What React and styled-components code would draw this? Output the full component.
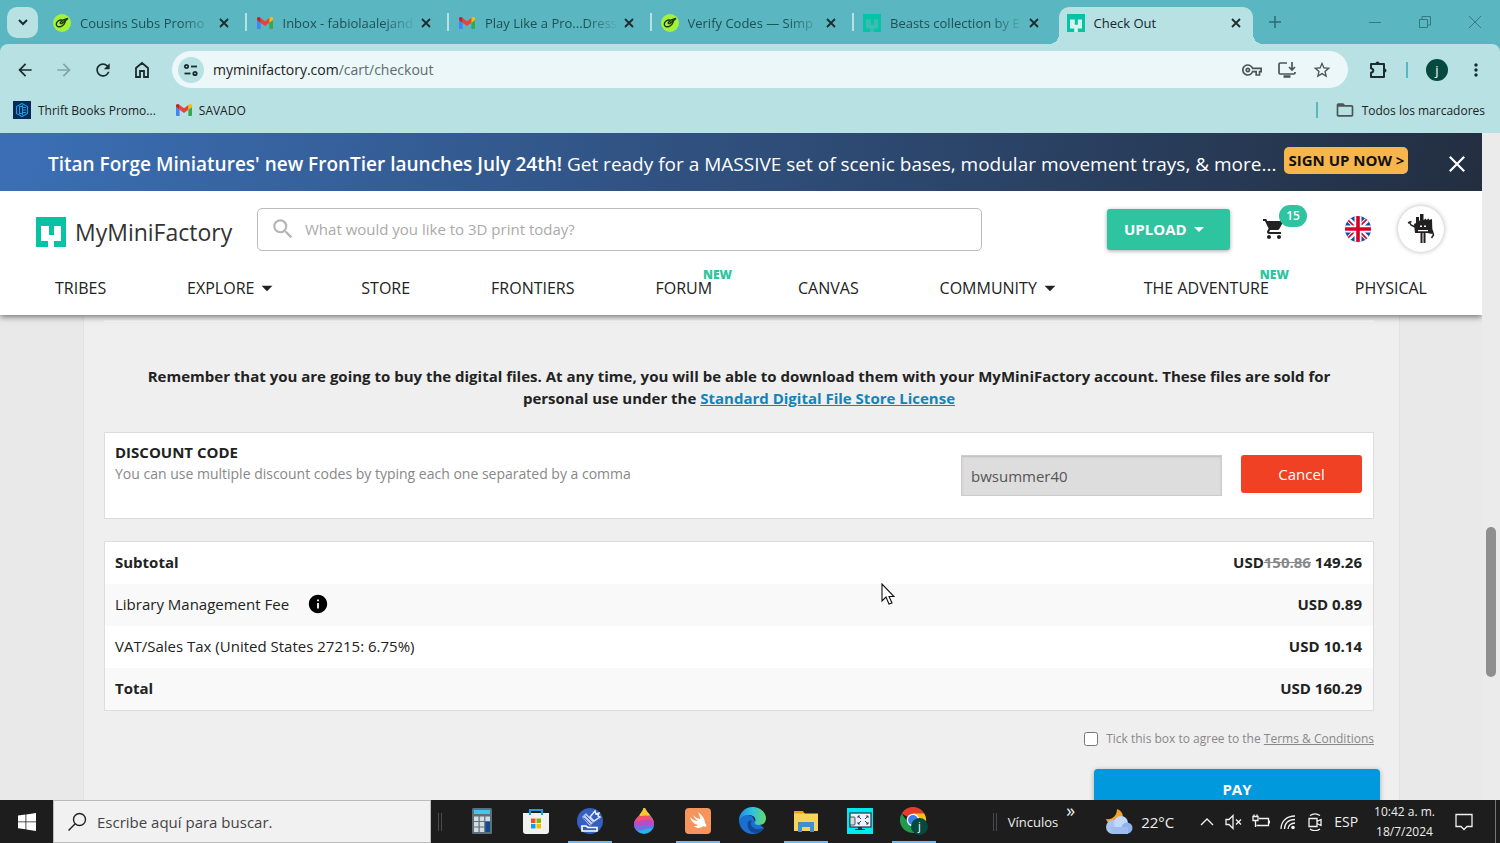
import styled, { createGlobalStyle, css } from 'styled-components';
import {
  MdArrowBack,
  MdArrowForward,
  MdRefresh,
  MdOutlineVpnKey,
  MdStarBorder,
  MdMoreVert,
  MdSearch,
  MdShoppingCart,
  MdArrowDropDown,
  MdInfo,
  MdFolderOpen,
} from 'react-icons/md';

const tabs = [
  { title: 'Cousins Subs Promo', icon: 'simply' },
  { title: 'Inbox - fabiolaalejand', icon: 'gmail' },
  { title: 'Play Like a Pro...Dress', icon: 'gmail' },
  { title: 'Verify Codes — Simp', icon: 'simply' },
  { title: 'Beasts collection by E', icon: 'mmf' },
  { title: 'Check Out', icon: 'mmf', active: true },
];

const menu = [
  { label: 'TRIBES' },
  { label: 'EXPLORE', caret: true },
  { label: 'STORE' },
  { label: 'FRONTIERS' },
  { label: 'FORUM', isNew: true },
  { label: 'CANVAS' },
  { label: 'COMMUNITY', caret: true },
  { label: 'THE ADVENTURE', isNew: true },
  { label: 'PHYSICAL' },
];

function GmailIcon() {
  return (
    <svg width="16" height="12" viewBox="52 42 88 66" aria-hidden="true">
      <path fill="#4285f4" d="M58 108h14V74L52 59v43c0 3.32 2.69 6 6 6" />
      <path fill="#34a853" d="M120 108h14c3.32 0 6-2.69 6-6V59l-20 15" />
      <path fill="#fbbc04" d="M120 48v26l20-15v-8c0-7.42-8.47-11.65-14.4-7.2" />
      <path fill="#ea4335" d="M72 74V48l24 18 24-18v26L96 92" />
      <path fill="#c5221f" d="M52 51v8l20 15V48l-5.6-4.2c-5.94-4.45-14.4-.22-14.4 7.2" />
    </svg>
  );
}

function SimplyIcon() {
  return (
    <svg width="18" height="18" viewBox="0 0 18 18" aria-hidden="true">
      <circle cx="9" cy="9" r="9" fill="#a4f13c" />
      <g fill="none" stroke="#1c3a12" strokeWidth="1.4" strokeLinecap="round" strokeLinejoin="round">
        <path d="M9 6C6 5.600 3.300 7.800 3.300 10.300c0 2.300 2.700 3 5 2 2.200-1 3.500-2.800 4-5" />
        <path d="M14.500 4.500C12 5 9 6.500 7.500 8.300c-.8 1.200.3 1.700 1.500 1.100L14.500 5" />
      </g>
    </svg>
  );
}

function MmfIcon({ size = 18, inner = '#fff' }) {
  return (
    <svg width={size} height={size} viewBox="0 0 30 30" aria-hidden="true">
      <path fill={inner} d="M3 3h24v27H3z" />
      <path fill="#05c3a5" fillRule="evenodd" d="M0 0h30v30H18v-6h7V9h-7v9h-5V9H5v15h7v6H0z" />
    </svg>
  );
}

function TabIcon({ name, active }) {
  if (name === 'gmail') return <GmailIcon />;
  if (name === 'simply') return <SimplyIcon />;
  return <MmfIcon inner={active ? '#d8f3f0' : '#3bbdb5'} />;
}

function CrossIcon({ size = 10, width = 1.8 }) {
  return (
    <svg width={size} height={size} viewBox="0 0 10 10" aria-hidden="true">
      <path d="M1 1l8 8M9 1L1 9" stroke="currentColor" strokeWidth={width} fill="none" />
    </svg>
  );
}

function HomeIcon() {
  return (
    <svg width="16" height="18" viewBox="0 0 16 18" fill="none" stroke="#1d2b2d" strokeWidth="1.8" aria-hidden="true">
      <path d="M2 16V7l6-5 6 5v9h-4v-6H6v6z" />
    </svg>
  );
}

function TuneIcon() {
  return (
    <svg width="16" height="14" viewBox="0 0 16 14" fill="none" stroke="#1d2b2d" strokeWidth="1.8" aria-hidden="true">
      <circle cx="3.500" cy="3.500" r="1.700" />
      <path d="M8 3.500h6" />
      <circle cx="12" cy="10.500" r="1.700" />
      <path d="M1.500 10.500h6" />
    </svg>
  );
}

function InstallIcon() {
  return (
    <svg width="20" height="18" viewBox="0 0 20 18" fill="none" stroke="#4b5557" strokeWidth="1.700" aria-hidden="true">
      <path d="M10 2H3.200C2.500 2 2 2.500 2 3.200v8.600c0 .7.500 1.200 1.200 1.200h13.600c.7 0 1.200-.5 1.200-1.200V11" />
      <path d="M15 1v7.500M12 6l3 3 3-3" />
      <path d="M6.500 15.500h7" strokeWidth="2.500" />
    </svg>
  );
}

function PuzzleIcon() {
  return (
    <svg width="20" height="20" viewBox="0 0 20 20" aria-hidden="true">
      <path d="M3 4h13v13H3v-4.200c3-.6 3-4 0-4.600z" fill="none" stroke="#1d2b2d" strokeWidth="2" strokeLinejoin="round" />
      <path d="M7.500 3.500a2 2 0 0 1 4 0zM16.500 8.500a2 2 0 0 1 0 4z" fill="#1d2b2d" />
    </svg>
  );
}

function ThriftIcon() {
  return (
    <svg width="18" height="18" viewBox="0 0 18 18" aria-hidden="true">
      <path fill="#062a55" d="M0 0h18v18H0z" />
      <path d="M9 2.500l5.500 3v7L9 15.500l-5.500-3v-7zM9 5.500H6.500v7H9M9.500 4v10M10 6.500h3M10 9h3M10 11.500h3" fill="none" stroke="#1c9be0" strokeWidth="1.100" />
    </svg>
  );
}

function FlagIcon() {
  return (
    <svg width="26" height="26" viewBox="0 0 26 26" aria-hidden="true">
      <clipPath id="flag"><circle cx="13" cy="13" r="13" /></clipPath>
      <g clipPath="url(#flag)">
        <path fill="#0b4ea8" d="M0 0h26v26H0z" />
        <path stroke="#fff" strokeWidth="5" d="M0 0l26 26M26 0L0 26" />
        <path stroke="#d80027" strokeWidth="1.600" d="M0 1l26 26M26-1L0 25" />
        <path stroke="#fff" strokeWidth="7" d="M13 0v26M0 13h26" />
        <path stroke="#d80027" strokeWidth="3.600" d="M13 0v26M0 13h26" />
      </g>
    </svg>
  );
}

function RobotIcon() {
  return (
    <svg width="28" height="32" viewBox="0 0 28 32" aria-hidden="true">
      <path fill="#231f20" d="M7 11l2-1V4h3v4l1-.5V1h3.500v6L19 5.500V7l3-1.500V7l3-1 .5 15L20 20H8z" />
      <path fill="none" stroke="#231f20" strokeWidth="1.500" d="M8 14l-4-2-2-3.500M1 10l3.500-1.500M25 17l1.500 5-2 3" />
      <path fill="none" stroke="#231f20" strokeWidth="2" d="M14.500 20v10M17.500 20v10" />
      <path fill="#fff" d="M13 12.500h2v1.500h-2zM17 12.500h2v1.500h-2zM11 17h10v1.300H11z" />
    </svg>
  );
}

function WindowsIcon() {
  return (
    <svg width="18" height="18" viewBox="0 0 18 18" fill="#fff" aria-hidden="true">
      <path d="M0 2.500L7.500 1.500v7H0zM8.300 1.400L18 0v8.500H8.300zM0 9.300h7.500v7L0 15.300zM8.300 9.300H18V18l-9.700-1.400z" />
    </svg>
  );
}

function CalculatorIcon() {
  return (
    <svg width="26" height="28" viewBox="0 0 26 28" aria-hidden="true">
      <rect x="3" y="1" width="20" height="26" rx="1.500" fill="#5c6f7b" />
      <path fill="#45c6ec" d="M5 3h16v4H5z" />
      <path fill="#d5dde2" d="M5 9.500h4.500V14H5zM10.700 9.500h4.500V14h-4.500zM16.400 9.500H21V14h-4.600zM5 15h4.500v4.500H5zM10.700 15h4.500v4.500h-4.500zM5 20.500h4.500V25H5zM10.700 20.500h4.500V25h-4.500z" />
      <path fill="#0f4b91" d="M16.400 15H21v10h-4.600z" />
    </svg>
  );
}

function StoreIcon() {
  return (
    <svg width="26" height="28" viewBox="0 0 26 28" aria-hidden="true">
      <path d="M7 8V3h12v5" fill="none" stroke="#1c9fe2" strokeWidth="2.200" />
      <path d="M0 6h26v18a3 3 0 0 1-3 3H3a3 3 0 0 1-3-3z" fill="#f1f1f1" />
      <path d="M6 5h2v3H6zM18 5h2v3h-2z" fill="#1c9fe2" />
      <path fill="#f25022" d="M8 11.500h4.500V16H8z" />
      <path fill="#7fba00" d="M13.500 11.500H18V16h-4.500z" />
      <path fill="#00a4ef" d="M8 17h4.500v4.500H8z" />
      <path fill="#ffb900" d="M13.500 17H18v4.500h-4.500z" />
    </svg>
  );
}

function ScannerIcon() {
  return (
    <svg width="26" height="26" viewBox="0 0 26 26" aria-hidden="true">
      <circle cx="13" cy="13" r="13" fill="#355fc0" />
      <path fill="#b9c9ee" d="M5 9l4-4 8 9-4 4z" />
      <path d="M6.500 9.500l7 7M8.500 7.500l7 7" stroke="#355fc0" strokeWidth="1" />
      <path d="M13 9l5-6 1 3 3-1-1 3 2 1-6 4z" fill="none" stroke="#e7edfb" strokeWidth="1.400" />
      <path d="M5 18h4l2 1.500h9V23H5z" fill="#355fc0" stroke="#fff" strokeWidth="1.600" />
    </svg>
  );
}

function PaintIcon() {
  return (
    <svg width="22" height="28" viewBox="0 0 22 28" aria-hidden="true">
      <clipPath id="drop"><path d="M12 1c2 5 9 9 9 16a10 10 0 0 1-20 0C1 12 9 7 10.500 1z" /></clipPath>
      <g clipPath="url(#drop)">
        <path fill="#22b5f0" d="M0 0h22v28H0z" />
        <path fill="#ffc828" d="M0 0h22v9c-5-3-8 2-14 1z" />
        <path fill="#f2506e" d="M4 8c5 3 9-3 17 4v4c-8-6-11 2-21-2z" />
        <path fill="#b94bc8" d="M0 13c7 4 12-4 22 2v5c-9-5-12 2-22-1z" />
        <path fill="#6f6fe0" d="M0 18c9 4 13-3 22 1v3c-9-3-12 4-22 1z" />
      </g>
    </svg>
  );
}

function BirdIcon() {
  return (
    <svg width="26" height="26" viewBox="0 0 26 26" aria-hidden="true">
      <rect width="26" height="26" rx="4" fill="#f5945c" />
      <path fill="#fff" d="M13 4c4 3 7 7 7 11 1 1 2 2 1 4-2-1-3-1-4 0-3 2-6 1-8-1 2 0 3 0 4-1-4-1-7-4-8-8 3 3 6 4 8 4-3-2-4-4-5-6 3 3 6 4 7 4 0-2-1-5-2-7z" />
    </svg>
  );
}

function EdgeIcon() {
  return (
    <svg width="27" height="27" viewBox="0 0 27 27" aria-hidden="true">
      <defs>
        <linearGradient id="edge-a" x1="0" x2="1">
          <stop offset="0" stopColor="#1d8fe0" />
          <stop offset=".5" stopColor="#2fc2df" />
          <stop offset="1" stopColor="#66d96b" />
        </linearGradient>
      </defs>
      <path fill="#1a6fd0" d="M0 13.500C0 8 5 7 9 8c4 0 6 3 6 5l10 8c-2.500 4-6.500 6-11.500 6C6 27 0 21 0 13.500z" />
      <path fill="url(#edge-a)" d="M0 13.500C0 6 6 0 13.500 0S27 5 27 11.500c0 4-3 6.500-6.500 6.500-3 0-5.500-1-4.800-2.300 2.300-3.700-1-7.700-5.700-7.700C5 8 1 10 0 13.500z" />
      <path fill="#114a94" d="M9 15c-2 6 3 12 9 11 3-1 5.500-2.500 7-5-4 2-12 2-13-4 0-2 0-3 1-4-2 0-3.500 1-4 2z" />
    </svg>
  );
}

function ExplorerIcon() {
  return (
    <svg width="26" height="24" viewBox="0 0 26 24" aria-hidden="true">
      <path fill="#e9a512" d="M1 2h9l2 3v2H1z" />
      <path fill="#fbd35b" d="M1 4.500h24V22H1z" />
      <path fill="#3f8fd2" d="M5 13h16v10h-4v-5H9v5H5z" />
    </svg>
  );
}

function MonitorIcon() {
  return (
    <svg width="26" height="26" viewBox="0 0 26 26" aria-hidden="true">
      <path fill="#00e8f0" d="M0 0h26v26H0z" />
      <rect x="3" y="5" width="21" height="14" fill="#eef" stroke="#23343a" strokeWidth="1.200" />
      <rect x="3" y="9" width="5" height="8" rx="1" fill="#cfdde2" stroke="#23343a" strokeWidth=".8" />
      <path d="M11 10V8h2M11 8l3 3M21 10V8h-2M21 8l-3 3M11 14v2h2M11 16l3-3M21 14v2h-2M21 16l-3-3" stroke="#23343a" strokeWidth=".9" fill="none" />
      <path fill="#23343a" d="M11 19h4v2h-4zM8 21h10v1H8z" />
    </svg>
  );
}

function ChromeIcon() {
  return (
    <svg width="28" height="28" viewBox="0 0 28 28" aria-hidden="true">
      <path fill="#e33b2e" d="M13 13L1.700 6.500A13 13 0 0 1 24.300 6.500z" />
      <path fill="#fbc116" d="M13 13V6.500h11.300A13 13 0 0 1 13 26z" />
      <path fill="#219a4b" d="M13 26A13 13 0 0 1 1.700 6.500L9 17l7 1z" />
      <circle cx="13" cy="13" r="6.300" fill="#fff" />
      <circle cx="13" cy="13" r="5" fill="#3c7ff0" />
      <circle cx="19.500" cy="19.500" r="8.500" fill="#05493f" />
      <text x="19.500" y="23" fontSize="11" fontFamily="Open Sans, sans-serif" fill="#fff" textAnchor="middle">j</text>
    </svg>
  );
}

function WeatherIcon() {
  return (
    <svg width="28" height="26" viewBox="0 0 28 26" aria-hidden="true">
      <path fill="#f2a32b" d="M12 0c5 2 7 6 5 10L8 15c-4 0-6-2-7-5 6 1 11-3 11-10z" />
      <circle cx="8" cy="18" r="7" fill="#a9c6f3" />
      <circle cx="16" cy="14" r="7" fill="#c2d8fa" />
      <circle cx="22" cy="19" r="5.500" fill="#8fb2ec" />
      <path fill="#9dbdf1" d="M5 18h18v7H7z" />
    </svg>
  );
}

function TrayIcon({ children }) {
  return (
    <svg width="18" height="18" viewBox="0 0 18 18" fill="none" stroke="#f2f2f2" strokeWidth="1.300" aria-hidden="true">
      {children}
    </svg>
  );
}

const apps = [
  { name: 'Calculadora', Icon: CalculatorIcon },
  { name: 'Microsoft Store', Icon: StoreIcon },
  { name: 'Scanner', Icon: ScannerIcon, open: true },
  { name: 'Paint 3D', Icon: PaintIcon },
  { name: 'Grabador', Icon: BirdIcon, open: true },
  { name: 'Edge', Icon: EdgeIcon },
  { name: 'Explorador', Icon: ExplorerIcon, open: true },
  { name: 'Pantalla', Icon: MonitorIcon },
  { name: 'Chrome', Icon: ChromeIcon, open: true },
];

function BrowserTab({ tab }) {
  return (
    <Tab $active={tab.active}>
      <Favicon>
        <TabIcon name={tab.icon} active={tab.active} />
      </Favicon>
      <TabTitle $active={tab.active}>{tab.title}</TabTitle>
      <IconButton $size={16} aria-label="Cerrar">
        <CrossIcon />
      </IconButton>
    </Tab>
  );
}

function BrowserChrome() {
  return (
    <Chrome>
      <TabStrip>
        <TabSearch aria-label="Buscar pestañas">
          <svg width="10" height="7" viewBox="0 0 10 7" aria-hidden="true">
            <path d="M1 1l4 4 4-4" fill="none" stroke="#1d2b2d" strokeWidth="2" />
          </svg>
        </TabSearch>
        <Tabs>
          {tabs.map((tab) => <BrowserTab key={tab.title} tab={tab} />)}
        </Tabs>
        <IconButton $size={36} $color="#2c6b70" aria-label="Nueva pestaña">
          <svg width="12" height="12" viewBox="0 0 12 12" aria-hidden="true">
            <path d="M6 0v12M0 6h12" stroke="currentColor" strokeWidth="1.500" />
          </svg>
        </IconButton>
        <WindowControls>
          <button aria-label="Minimizar">
            <svg width="12" height="12" viewBox="0 0 12 12" aria-hidden="true"><path d="M0 6.500h12" stroke="#35797e" /></svg>
          </button>
          <button aria-label="Restaurar">
            <svg width="12" height="12" viewBox="0 0 12 12" fill="none" stroke="#35797e" aria-hidden="true">
              <path d="M.5 3.500h8v8h-8zM3 3.500v-3h8.500V9H9" />
            </svg>
          </button>
          <button aria-label="Cerrar ventana">
            <svg width="12" height="12" viewBox="0 0 12 12" aria-hidden="true"><path d="M0 0l12 12M12 0L0 12" stroke="#35797e" /></svg>
          </button>
        </WindowControls>
      </TabStrip>

      <Toolbar>
        <NavButtons>
          <IconButton $size={20} aria-label="Atrás"><MdArrowBack size={20} /></IconButton>
          <IconButton $size={20} $color="#84a3a7" aria-label="Adelante"><MdArrowForward size={20} /></IconButton>
          <IconButton $size={20} aria-label="Recargar"><MdRefresh size={20} /></IconButton>
          <IconButton $size={20} aria-label="Inicio"><HomeIcon /></IconButton>
        </NavButtons>
        <Omnibox>
          <SiteInfo aria-label="Información del sitio"><TuneIcon /></SiteInfo>
          <Address>myminifactory.com<span>/cart/checkout</span></Address>
          <OmniActions>
            <IconButton $size={20} $color="#4b5557" aria-label="Contraseñas"><MdOutlineVpnKey size={20} /></IconButton>
            <IconButton $size={20} aria-label="Instalar"><InstallIcon /></IconButton>
            <IconButton $size={20} $color="#4b5557" aria-label="Favorito"><MdStarBorder size={20} /></IconButton>
          </OmniActions>
        </Omnibox>
        <ToolbarEnd>
          <IconButton $size={20} aria-label="Extensiones"><PuzzleIcon /></IconButton>
          <Divider />
          <Avatar>j</Avatar>
          <IconButton $size={20} aria-label="Menú"><MdMoreVert size={20} /></IconButton>
        </ToolbarEnd>
      </Toolbar>

      <Bookmarks>
        <Bookmark href="#"><ThriftIcon />Thrift Books Promo...</Bookmark>
        <Bookmark href="#"><GmailIcon />SAVADO</Bookmark>
        <BookmarksEnd>
          <Divider />
          <Bookmark href="#"><MdFolderOpen size={20} color="#4b5557" />Todos los marcadores</Bookmark>
        </BookmarksEnd>
      </Bookmarks>
    </Chrome>
  );
}

function SiteHeader() {
  return (
    <Header>
      <Promo>
        <p><strong>Titan Forge Miniatures' new FronTier launches July 24th!</strong> Get ready for a MASSIVE set of scenic bases, modular movement trays, &amp; more...</p>
        <SignUp href="#">SIGN UP NOW &gt;</SignUp>
        <IconButton $size={16} $color="#fff" aria-label="Close"><CrossIcon size={18} width={1.2} /></IconButton>
      </Promo>
      <HeaderTop>
        <Logo href="#"><MmfIcon size={30} />MyMiniFactory</Logo>
        <SearchBox>
          <MdSearch size={26} color="#b5b5b5" />
          <input type="search" aria-label="Search" placeholder="What would you like to 3D print today?" />
        </SearchBox>
        <HeaderActions>
          <Upload>UPLOAD<MdArrowDropDown size={24} /></Upload>
          <Cart href="#" aria-label="Cart">
            <MdShoppingCart size={24} />
            <CartCount>15</CartCount>
          </Cart>
          <IconButton $size={26} aria-label="Language"><FlagIcon /></IconButton>
          <Profile aria-label="Profile"><RobotIcon /></Profile>
        </HeaderActions>
      </HeaderTop>
      <Menu>
        {menu.map((item) => (
          <MenuItem key={item.label} href="#" $isNew={item.isNew}>
            {item.label}
            {item.caret && <MdArrowDropDown size={26} />}
            {item.isNew && <NewFlag>NEW</NewFlag>}
          </MenuItem>
        ))}
      </Menu>
    </Header>
  );
}

function Checkout() {
  return (
    <Main>
      <Sheet>
        <PreviousBox />
        <Note>
          Remember that you are going to buy the digital files. At any time, you will be able to download them with your MyMiniFactory account. These files are sold for personal use under the <a href="#">Standard Digital File Store License</a>
        </Note>
        <Discount>
          <div>
            <label htmlFor="code">DISCOUNT CODE</label>
            <p>You can use multiple discount codes by typing each one separated by a comma</p>
          </div>
          <CodeForm>
            <CodeInput id="code" defaultValue="bwsummer40" disabled />
            <Cancel>Cancel</Cancel>
          </CodeForm>
        </Discount>
        <Totals>
          <tbody>
            <tr>
              <th scope="row"><b>Subtotal</b></th>
              <td>USD<s>150.86</s> 149.26</td>
            </tr>
            <tr>
              <th scope="row"><Fee>Library Management Fee <MdInfo size={22} color="#000" /></Fee></th>
              <td>USD 0.89</td>
            </tr>
            <tr>
              <th scope="row">VAT/Sales Tax (United States 27215: 6.75%)</th>
              <td>USD 10.14</td>
            </tr>
            <tr>
              <th scope="row"><b>Total</b></th>
              <td>USD 160.29</td>
            </tr>
          </tbody>
        </Totals>
        <Terms>
          <input type="checkbox" id="terms" />
          <label htmlFor="terms">Tick this box to agree to the <a href="#">Terms &amp; Conditions</a></label>
        </Terms>
        <Pay>PAY</Pay>
      </Sheet>
    </Main>
  );
}

function Taskbar() {
  return (
    <Bar>
      <Start aria-label="Inicio"><WindowsIcon /></Start>
      <TaskSearch>
        <svg width="20" height="20" viewBox="0 0 20 20" fill="none" stroke="#222" strokeWidth="1.400" aria-hidden="true">
          <circle cx="12.500" cy="7.500" r="6" />
          <path d="M8.200 11.800L1.500 18.500" />
        </svg>
        <input type="text" aria-label="Buscar" placeholder="Escribe aquí para buscar." />
      </TaskSearch>
      <Grip />
      <Apps>
        {apps.map(({ name, Icon, open }) => (
          <AppButton key={name} $open={open} aria-label={name}><Icon /></AppButton>
        ))}
      </Apps>
      <Tray>
        <Grip />
        <Links>Vínculos<sup>»</sup></Links>
        <Weather><WeatherIcon />22°C</Weather>
        <TrayIcons>
          <TrayIcon><path d="M3 12l6-6 6 6" /></TrayIcon>
          <TrayIcon><path d="M1 6.500h3l4-4v13l-4-4H1zM11 6.500l5 5M16 6.500l-5 5" /></TrayIcon>
          <TrayIcon><path d="M7 5.500h9.500v7H4.500M17.500 7.500v3M1 3.500h5v4H1zM3.500 7.500V14M2 1.500v2M5 1.500v2" /></TrayIcon>
          <TrayIcon>
            <path d="M2 16C2 8 8 3 16 3M5.500 16c0-6 4-9.500 10.500-9.500M9 16c0-3.500 3-6 7-6" />
            <circle cx="14" cy="14.500" r="1.800" fill="#f2f2f2" stroke="none" />
          </TrayIcon>
          <TrayIcon><path d="M3 5.500h8v8H3zM11 8.500l4-2v6l-4-2M4 2.500c3-2 7-2 10 0M4 16c3 2 7 2 10 0" /></TrayIcon>
        </TrayIcons>
        <span>ESP</span>
        <Clock>10:42 a. m.<br />18/7/2024</Clock>
        <Notice aria-label="Notificaciones">
          <TrayIcon><path d="M1 1.500h16v12h-5l-3 3-3-3H1z" /></TrayIcon>
        </Notice>
      </Tray>
    </Bar>
  );
}

export default function App() {
  return (
    <Desktop>
      <GlobalStyle />
      <BrowserChrome />
      <Viewport>
        <Page>
          <SiteHeader />
          <Checkout />
        </Page>
        <ScrollTrack><ScrollThumb /></ScrollTrack>
      </Viewport>
      <Taskbar />
      <Cursor width="14" height="23" viewBox="0 0 14 23" aria-hidden="true">
        <path d="M1 1v17l4-4 3 7 3-1-3-6.500h5z" fill="#fff" stroke="#111" strokeWidth="1.100" />
      </Cursor>
    </Desktop>
  );
}

const GlobalStyle = createGlobalStyle`
  * {
    box-sizing: border-box;
  }

  body {
    margin: 0;
    font-family: 'Open Sans', sans-serif;
    color: #222;
  }

  button, input {
    font-family: inherit;
    border: 0;
    padding: 0;
    margin: 0;
  }

  p {
    margin: 0;
  }

  a {
    color: inherit;
    text-decoration: none;
  }

  svg {
    flex-shrink: 0;
  }
`;

const Desktop = styled.div`
  position: relative;
  display: flex;
  flex-direction: column;
  height: 100vh;
  overflow: hidden;
`;

const IconButton = styled.button`
  display: flex;
  align-items: center;
  justify-content: center;
  flex-shrink: 0;
  width: ${(p) => p.$size}px;
  height: ${(p) => p.$size}px;
  background: none;
  color: ${(p) => p.$color || '#1d2b2d'};
`;

/* browser */

const Chrome = styled.header`
  background: #5ab7c1;
  font-size: 13px;
  flex-shrink: 0;
`;

const TabStrip = styled.div`
  display: flex;
  align-items: center;
  height: 44px;
  padding-left: 7px;
`;

const TabSearch = styled.button`
  display: flex;
  align-items: center;
  justify-content: center;
  width: 31px;
  height: 31px;
  margin-right: 4px;
  border-radius: 10px;
  background: #b8e1e4;
`;

const Tabs = styled.div`
  display: grid;
  grid-template-columns: repeat(6, 1fr);
  flex: 0 1 1215px;
  align-self: stretch;
  min-width: 0;
`;

const Tab = styled.div`
  position: relative;
  display: flex;
  align-items: center;
  min-width: 0;
  margin: 7px 0 0;
  padding: 0 13px 6px 11px;
  color: #1f4e53;

  & + &::before {
    content: '';
    position: absolute;
    left: 0;
    top: 6px;
    width: 2px;
    height: 18px;
    background: #b8e1e4;
  }

  ${(p) => p.$active && css`
    color: #14272a;
    margin: 7px 4px 0 4px;
    padding: 0 9px 6px 8px;
    border-radius: 10px 10px 0 0;
    background: #b8e1e4;

    & + &::before,
    &&::before,
    &::after {
      content: '';
      position: absolute;
      top: auto;
      bottom: 0;
      width: 10px;
      height: 10px;
      background: radial-gradient(circle at 0 0, transparent 10px, #b8e1e4 10px);
    }

    &&::before {
      left: -10px;
    }

    &::after {
      right: -10px;
      background: radial-gradient(circle at 100% 0, transparent 10px, #b8e1e4 10px);
    }
  `}
`;

const Favicon = styled.span`
  display: flex;
  justify-content: center;
  width: 18px;
  margin-right: 9px;
`;

const TabTitle = styled.span`
  flex: 1;
  min-width: 0;
  margin-right: 3px;
  overflow: hidden;
  white-space: nowrap;
  mask-image: ${(p) => (p.$active ? 'none' : 'linear-gradient(to right, #000 100px, transparent 134px)')};
`;

const WindowControls = styled.div`
  display: flex;
  margin-left: auto;

  button {
    display: flex;
    align-items: center;
    justify-content: center;
    width: 50px;
    height: 36px;
    background: none;
  }
`;

const Toolbar = styled.div`
  display: flex;
  align-items: center;
  height: 51px;
  padding-left: 15px;
  background: #b8e1e4;
  border-radius: 8px 8px 0 0;
`;

const NavButtons = styled.div`
  display: flex;
  gap: 19px;
  margin-right: 20px;
`;

const Omnibox = styled.div`
  display: flex;
  align-items: center;
  flex: 1;
  height: 37px;
  padding: 0 16px 0 6px;
  border-radius: 19px;
  background: #ebf7f8;
`;

const SiteInfo = styled.button`
  display: flex;
  align-items: center;
  justify-content: center;
  width: 26px;
  height: 26px;
  margin-right: 9px;
  border-radius: 50%;
  background: #b8e1e4;
`;

const Address = styled.span`
  font-size: 14px;

  span {
    color: #5c6c6f;
  }
`;

const OmniActions = styled.div`
  display: flex;
  gap: 15px;
  margin-left: auto;
`;

const ToolbarEnd = styled.div`
  display: flex;
  align-items: center;
  gap: 18px;
  padding: 0 14px 0 20px;
`;

const Divider = styled.span`
  width: 2px;
  height: 16px;
  background: #5ab7c1;
`;

const Avatar = styled.button`
  width: 22px;
  height: 22px;
  border-radius: 50%;
  background: #05493f;
  color: #fff;
  font-size: 13px;
  line-height: 20px;
`;

const Bookmarks = styled.nav`
  display: flex;
  align-items: center;
  gap: 20px;
  height: 38px;
  padding: 0 15px 8px 13px;
  background: #b8e1e4;
  font-size: 12px;
`;

const Bookmark = styled.a`
  display: flex;
  align-items: center;
  gap: 7px;
`;

const BookmarksEnd = styled.div`
  display: flex;
  align-items: center;
  gap: 17px;
  margin-left: auto;
`;

const Viewport = styled.div`
  display: flex;
  flex: 1;
  min-height: 0;
`;

const Page = styled.div`
  display: flex;
  flex-direction: column;
  flex: 1;
  min-width: 0;
  overflow: hidden;
  background: #e9e9e9;
`;

const ScrollTrack = styled.div`
  display: grid;
  grid-template-rows: 394fr 150fr 123fr;
  width: 18px;
  padding: 0 4px;
  background: #ebebeb;
`;

const ScrollThumb = styled.div`
  grid-row: 2;
  border-radius: 5px;
  background: #8f8f8f;
`;

/* site header */

const Header = styled.header`
  position: relative;
  z-index: 1;
  background: #fff;
  box-shadow: 0 2px 6px rgba(0, 0, 0, 0.5);
`;

const Promo = styled.div`
  display: flex;
  align-items: center;
  height: 58px;
  padding: 3px 17px 0 48px;
  background: linear-gradient(100deg, #3b6fb6, #232e40);
  color: #fff;
  font-size: 19px;
  white-space: nowrap;

  p {
    margin-right: 8px;
  }

  strong {
    font-weight: 600;
  }

  button {
    margin-left: auto;
  }
`;

const SignUp = styled.a`
  height: 27px;
  margin-bottom: 6px;
  padding: 0 4px;
  border-radius: 5px;
  background: #f7b64c;
  color: #111;
  font-size: 15px;
  font-weight: 700;
  line-height: 27px;
`;

const HeaderTop = styled.div`
  display: flex;
  align-items: center;
  padding: 14px 38px 0 36px;
  height: 62px;
`;

const Logo = styled.a`
  display: flex;
  align-items: center;
  gap: 9px;
  width: 221px;
  padding-top: 5px;
  color: #333;
  font-size: 23px;
  line-height: 30px;
`;

const SearchBox = styled.div`
  display: flex;
  align-items: center;
  flex: 0 1 725px;
  height: 43px;
  padding: 0 12px;
  border: 1px solid #bbb;
  border-radius: 5px;

  input {
    flex: 1;
    margin-left: 9px;
    background: none;
    font-size: 15px;
  }

  input::placeholder {
    color: #aaa;
  }
`;

const HeaderActions = styled.div`
  display: flex;
  align-items: center;
  margin-left: auto;
`;

const Upload = styled.button`
  display: flex;
  align-items: center;
  width: 123px;
  height: 41px;
  padding-left: 17px;
  border-radius: 3px;
  background: #2ec4a0;
  box-shadow: 0 1px 4px rgba(0, 0, 0, 0.35);
  color: #fff;
  font-size: 15px;
  font-weight: 700;
`;

const Cart = styled.a`
  position: relative;
  display: flex;
  margin: 0 59px 0 32px;
  color: #222;
`;

const CartCount = styled.span`
  position: absolute;
  left: 17px;
  top: -12px;
  width: 28px;
  border-radius: 11px;
  background: #2ec4a0;
  color: #fff;
  font-size: 12px;
  font-weight: 600;
  line-height: 22px;
  text-align: center;
`;

const Profile = styled.button`
  display: flex;
  align-items: center;
  justify-content: center;
  width: 46px;
  height: 46px;
  margin-left: 27px;
  border-radius: 50%;
  background: #fff;
  box-shadow: 0 0 5px rgba(0, 0, 0, 0.3);
`;

const Menu = styled.nav`
  display: flex;
  justify-content: space-between;
  height: 62px;
  padding: 22px 55px 0;
`;

const MenuItem = styled.a`
  position: relative;
  display: flex;
  align-items: center;
  height: 26px;
  padding-right: ${(p) => (p.$isNew ? 5 : 0)}px;
  font-size: 16px;
`;

const NewFlag = styled.span`
  position: absolute;
  right: -15px;
  top: -8px;
  color: #2ec4a0;
  font-size: 12px;
  font-weight: 800;
  line-height: 16px;
`;

/* checkout */

const Main = styled.main`
  flex: 1;
  padding: 0 82px 0 83px;
`;

const Sheet = styled.div`
  padding: 0 25px 60px 20px;
  min-height: 100%;
  border: solid #e2e2e2;
  border-width: 0 1px;
  background: #efefef;
`;

const PreviousBox = styled.div`
  height: 7px;
  border-bottom: 2px solid #f8f8f8;
`;

const Note = styled.p`
  padding: 43px 20px 23px;
  font-size: 15px;
  font-weight: 700;
  line-height: 22px;
  text-align: center;

  a {
    color: #1383b8;
    text-decoration: underline;
  }
`;

const Discount = styled.section`
  display: flex;
  justify-content: space-between;
  height: 87px;
  padding: 8px 11px 0 10px;
  border: 1px solid #ddd;
  background: #fff;

  label {
    display: block;
    font-size: 15px;
    font-weight: 700;
    line-height: 22px;
  }

  p {
    color: #888;
    font-size: 14px;
    line-height: 22px;
  }
`;

const CodeForm = styled.div`
  display: flex;
  align-items: flex-start;
  gap: 19px;
  padding-top: 14px;
`;

const CodeInput = styled.input`
  width: 261px;
  height: 41px;
  padding: 0 9px;
  border: 1px solid #ccc;
  background: #ddd;
  box-shadow: inset 0 1px 2px rgba(0, 0, 0, 0.15);
  color: #555;
  font-size: 15px;
`;

const Cancel = styled.button`
  width: 121px;
  height: 38px;
  border-radius: 3px;
  background: #f04124;
  color: #fff;
  font-size: 15px;
`;

const Totals = styled.table`
  width: 100%;
  margin-top: 22px;
  border: 1px solid #ddd;
  border-collapse: separate;
  border-spacing: 0;
  background: #fff;
  font-size: 15px;

  tr {
    height: 42px;
  }

  tr:nth-child(even) {
    background: #f9f9f9;
  }

  th, td {
    padding: 0 11px 2px 10px;
    font-weight: 400;
    text-align: left;
  }

  b, td {
    font-weight: 700;
  }

  td {
    text-align: right;
  }

  s {
    color: #888;
  }
`;

const Fee = styled.span`
  display: flex;
  align-items: center;
  gap: 18px;
`;

const Terms = styled.div`
  display: flex;
  align-items: center;
  justify-content: flex-end;
  gap: 8px;
  margin-top: 17px;
  color: #888;
  font-size: 12px;
  line-height: 22px;

  input {
    width: 14px;
    height: 14px;
  }

  a {
    text-decoration: underline;
  }
`;

const Pay = styled.button`
  display: block;
  width: 286px;
  height: 40px;
  margin: 19px -6px 0 auto;
  border-radius: 4px;
  background: #0099de;
  box-shadow: 0 1px 5px rgba(0, 0, 0, 0.3);
  color: #fff;
  font-size: 15px;
  font-weight: 700;
`;

/* taskbar */

const Bar = styled.footer`
  position: relative;
  z-index: 2;
  display: flex;
  align-items: center;
  flex-shrink: 0;
  height: 43px;
  background: #1d1d1d;
  color: #eee;
  font-size: 14px;
`;

const Start = styled.button`
  display: flex;
  align-items: center;
  justify-content: center;
  width: 53px;
  height: 43px;
  background: none;
`;

const TaskSearch = styled.div`
  display: flex;
  align-items: center;
  gap: 10px;
  width: 378px;
  height: 43px;
  padding: 0 13px;
  border: 1px solid #bbb;
  background: #f1f1f1;

  input {
    flex: 1;
    background: none;
    font-size: 15px;
  }

  input::placeholder {
    color: #444;
  }
`;

const Grip = styled.span`
  width: 4px;
  height: 18px;
  border: solid #4a4a4a;
  border-width: 0 1px;
  margin: 0 7px;
`;

const Apps = styled.div`
  display: flex;
  margin-left: 6px;
`;

const AppButton = styled.button`
  display: flex;
  align-items: center;
  justify-content: center;
  width: 44px;
  height: 43px;
  margin: 0 5px;
  background: none;
  border-bottom: 2px solid ${(p) => (p.$open ? '#76b9ed' : 'transparent')};
`;

const Tray = styled.div`
  display: flex;
  align-items: center;
  margin-left: auto;
  padding-right: 4px;
`;

const Links = styled.span`
  display: flex;
  align-items: center;
  gap: 8px;
  margin: 0 30px 0 4px;
  font-size: 13px;

  sup {
    font-size: 18px;
    line-height: 18px;
    margin-bottom: 24px;
  }
`;

const Weather = styled.span`
  display: flex;
  align-items: center;
  gap: 8px;
  margin-right: 24px;
  font-size: 15px;
`;

const TrayIcons = styled.span`
  display: flex;
  gap: 9px;
  margin-right: 10px;
`;

const Clock = styled.time`
  margin: 0 20px 0 16px;
  font-size: 12px;
  line-height: 20px;
  text-align: center;
`;

const Notice = styled.button`
  display: flex;
  align-items: center;
  height: 43px;
  padding-right: 22px;
  border-right: 1px solid #777;
  background: none;
`;

const Cursor = styled.svg`
  position: absolute;
  left: 881px;
  top: 583px;
`;
